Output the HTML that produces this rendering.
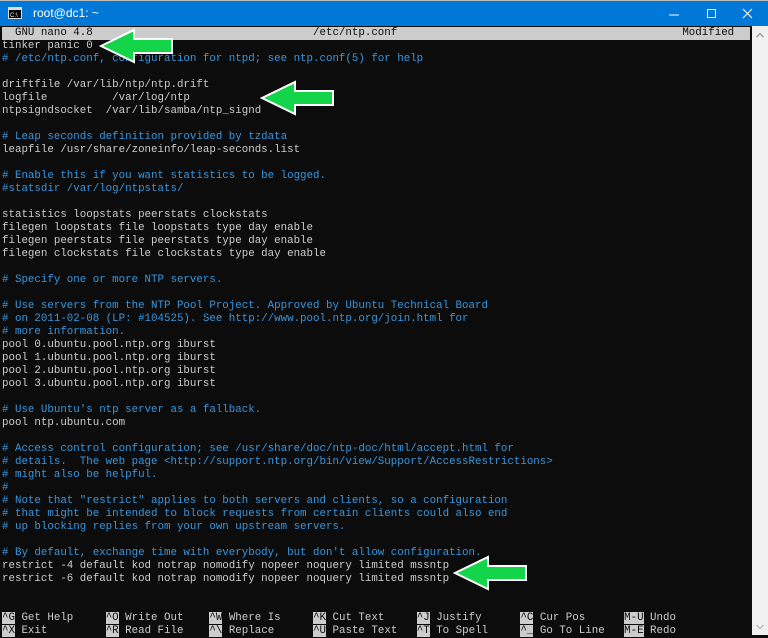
<!DOCTYPE html><html><head><style>
body{margin:0;width:768px;height:635px;overflow:hidden;background:#0c0c0c;font-family:"Liberation Mono",monospace;position:relative}
.tb{position:absolute;left:0;top:0;width:768px;height:26px;background:#0078d7;border-top:1px solid #bbb;box-sizing:border-box}
.tt{position:absolute;left:33px;top:5px;color:#fff;font:12px "Liberation Sans",sans-serif}
.sb{position:absolute;left:752px;top:26px;width:16px;height:609px;background:#f0f0f0}
.term{position:absolute;left:2px;top:27px;width:750px;font-size:10.8px;line-height:13px;color:#cccccc;white-space:pre}
.c{color:#3a96dd}
.hd{background:#cccccc;color:#0c0c0c;width:748px;position:relative}
.k{background:#cccccc;color:#0c0c0c}
</style></head><body>
<div class="tb">
<svg style="position:absolute;left:8px;top:6px" width="14" height="12"><rect x="0.5" y="0.5" width="13" height="11" fill="#000" stroke="#ddd"/><rect x="1" y="1" width="12" height="2" fill="#ddd"/><text x="2" y="10" fill="#fff" font-size="6" font-family="Liberation Sans">C:\</text></svg>
<div class="tt">root@dc1: ~</div>
<svg style="position:absolute;left:668px;top:8px" width="12" height="12"><line x1="1" y1="6" x2="11" y2="6" stroke="#fff"/></svg>
<svg style="position:absolute;left:706px;top:7px" width="12" height="12"><rect x="1.5" y="1.5" width="8" height="8" fill="none" stroke="#fff"/></svg>
<svg style="position:absolute;left:742px;top:7px" width="12" height="12"><path d="M1 1L10 10M10 1L1 10" stroke="#fff"/></svg>
</div>
<div class="sb"><svg style="position:absolute;left:4px;top:6px" width="8" height="6"><path d="M0.5 5L4 1.5L7.5 5" stroke="#888" fill="none"/></svg><svg style="position:absolute;left:4px;top:598px" width="8" height="6"><path d="M0.5 1L4 4.5L7.5 1" stroke="#aaa" fill="none"/></svg></div>
<div class="term"><div class="hd">  GNU nano 4.8                                  /etc/ntp.conf                                            Modified  </div>tinker panic 0
<span class="c"># /etc/ntp.conf, configuration for ntpd; see ntp.conf(5) for help</span>

driftfile /var/lib/ntp/ntp.drift
logfile          /var/log/ntp
ntpsigndsocket  /var/lib/samba/ntp_signd

<span class="c"># Leap seconds definition provided by tzdata</span>
leapfile /usr/share/zoneinfo/leap-seconds.list

<span class="c"># Enable this if you want statistics to be logged.</span>
<span class="c">#statsdir /var/log/ntpstats/</span>

statistics loopstats peerstats clockstats
filegen loopstats file loopstats type day enable
filegen peerstats file peerstats type day enable
filegen clockstats file clockstats type day enable

<span class="c"># Specify one or more NTP servers.</span>

<span class="c"># Use servers from the NTP Pool Project. Approved by Ubuntu Technical Board</span>
<span class="c"># on 2011-02-08 (LP: #104525). See http://www.pool.ntp.org/join.html for</span>
<span class="c"># more information.</span>
pool 0.ubuntu.pool.ntp.org iburst
pool 1.ubuntu.pool.ntp.org iburst
pool 2.ubuntu.pool.ntp.org iburst
pool 3.ubuntu.pool.ntp.org iburst

<span class="c"># Use Ubuntu's ntp server as a fallback.</span>
pool ntp.ubuntu.com

<span class="c"># Access control configuration; see /usr/share/doc/ntp-doc/html/accept.html for</span>
<span class="c"># details.  The web page &lt;http://support.ntp.org/bin/view/Support/AccessRestrictions&gt;</span>
<span class="c"># might also be helpful.</span>
<span class="c">#</span>
<span class="c"># Note that "restrict" applies to both servers and clients, so a configuration</span>
<span class="c"># that might be intended to block requests from certain clients could also end</span>
<span class="c"># up blocking replies from your own upstream servers.</span>

<span class="c"># By default, exchange time with everybody, but don't allow configuration.</span>
restrict -4 default kod notrap nomodify nopeer noquery limited mssntp
restrict -6 default kod notrap nomodify nopeer noquery limited mssntp


<span class="k">^G</span> Get Help     <span class="k">^O</span> Write Out    <span class="k">^W</span> Where Is     <span class="k">^K</span> Cut Text     <span class="k">^J</span> Justify      <span class="k">^C</span> Cur Pos      <span class="k">M-U</span> Undo
<span class="k">^X</span> Exit         <span class="k">^R</span> Read File    <span class="k">^\</span> Replace      <span class="k">^U</span> Paste Text   <span class="k">^T</span> To Spell     <span class="k">^_</span> Go To Line   <span class="k">M-E</span> Redo</div>
<svg style="position:absolute;left:0;top:0" width="768" height="635">
<g fill="#14d44a" stroke="#fff" stroke-width="2" stroke-linejoin="miter">
<path d="M101 46L134 30V39H172V53H134V62Z"/>
<path d="M262 98L295 82V91H333V105H295V114Z"/>
<path d="M455 573L488 557V566H526V580H488V589Z"/>
</g></svg>
</body></html>
